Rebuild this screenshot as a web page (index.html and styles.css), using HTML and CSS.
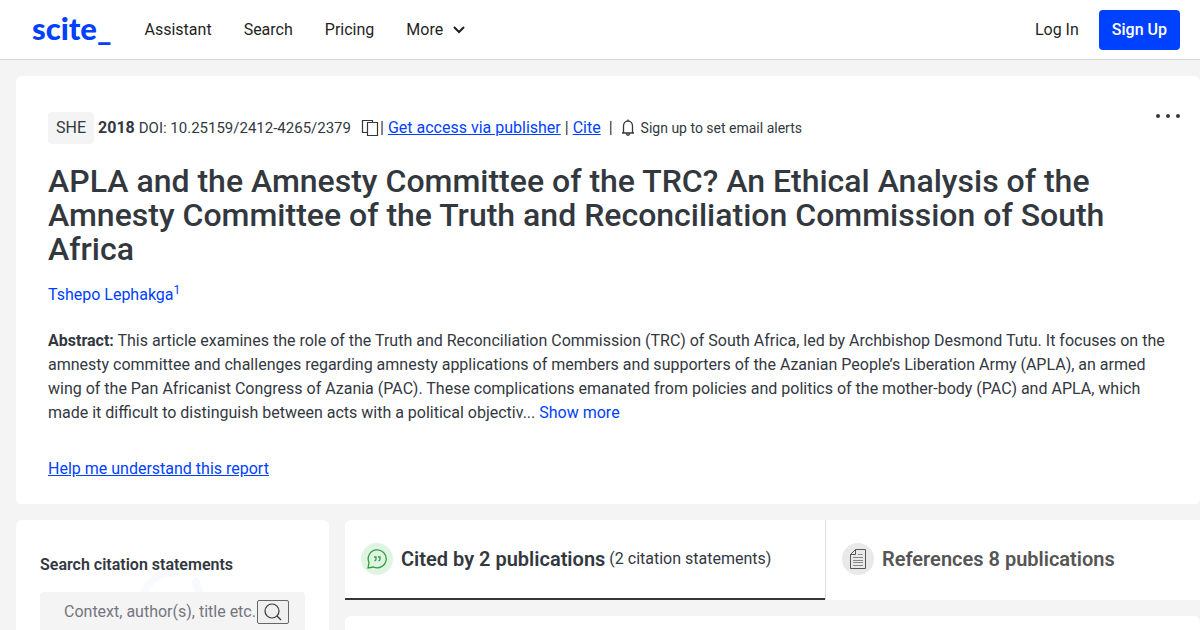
FILE: index.html
```html
<!DOCTYPE html>
<html lang="en">
<head>
    <meta charset="UTF-8">
    <meta name="viewport" content="width=device-width, initial-scale=1.0">
    <title>APLA and the Amnesty Committee of the TRC? - scite</title>
    <link rel="stylesheet" href="styles.css">
</head>
<body>
    <header class="header">
        <a class="logo" href="#">scite_</a>
        <nav class="nav">
            <a href="#">Assistant</a>
            <a href="#">Search</a>
            <a href="#">Pricing</a>
            <button class="more" type="button">More
                <svg width="12" height="8" viewBox="0 0 12 8" fill="none" stroke="currentColor" stroke-width="2"><path d="M1 1l5 5 5-5"/></svg>
            </button>
        </nav>
        <div class="account">
            <a href="#">Log In</a>
            <button class="signup" type="button">Sign Up</button>
        </div>
    </header>
    <main class="page">
        <section class="card paper">
            <div class="meta">
                <span class="journal">SHE</span>
                <b class="year">2018</b>
                <span class="doi">DOI: 10.25159/2412-4265/2379</span>
                <button class="icon-btn copy" type="button" aria-label="Copy DOI">
                    <svg width="18" height="18" viewBox="0 0 18 18" fill="none" stroke="currentColor" stroke-width="1.2"><path d="M6 13.500H1.500v-12h10v2M6.500 3.500h10v13h-10z"/></svg>
                </button>
                <span>|</span>
                <a class="publisher" href="#">Get access via publisher</a>
                <span>|</span>
                <a class="cite" href="#">Cite</a>
                <span>|</span>
                <button class="icon-btn alerts" type="button">
                    <svg width="14" height="18" viewBox="0 0 14 18" fill="none" stroke="currentColor" stroke-width="1.300"><path d="M1 14h12M2.500 14V7a4.500 5 0 0 1 9 0v7M7 2V.5M5.500 14.500a1.500 1.800 0 0 0 3 0"/></svg>
                    Sign up to set email alerts
                </button>
                <button class="icon-btn dots" type="button" aria-label="More actions">
                    <svg width="24" height="4" viewBox="0 0 24 4" fill="currentColor"><circle cx="2" cy="2" r="2"/><circle cx="12" cy="2" r="2"/><circle cx="22" cy="2" r="2"/></svg>
                </button>
            </div>
            <h1>APLA and the Amnesty Committee of the TRC? An Ethical Analysis of the Amnesty Committee of the Truth and Reconciliation Commission of South Africa</h1>
            <p class="author"><a href="#">Tshepo Lephakga<sup>1</sup></a></p>
            <p class="abstract"><b>Abstract:</b> This article examines the role of the Truth and Reconciliation Commission (TRC) of South Africa, led by Archbishop Desmond Tutu. It focuses on the amnesty committee and challenges regarding amnesty applications of members and supporters of the Azanian People’s Liberation Army (APLA), an armed wing of the Pan Africanist Congress of Azania (PAC). These complications emanated from policies and politics of the mother-body (PAC) and APLA, which made it difficult to distinguish between acts with a political objectiv... <a href="#">Show more</a></p>
            <a class="help" href="#">Help me understand this report</a>
        </section>
        <div class="columns">
            <aside class="card sidebar">
                <svg class="ring" width="64" height="64" viewBox="0 0 64 64" fill="none" stroke="#f8faff" stroke-width="8"><path d="M36 60A28 28 0 1 1 38 5M54 11Q60 20 60 32"/></svg>
                <label for="search">Search citation statements</label>
                <form class="search">
                    <input id="search" type="text" placeholder="Context, author(s), title etc.">
                    <button type="button" aria-label="Search">
                        <svg width="18" height="18" viewBox="0 0 18 18" fill="none" stroke="currentColor" stroke-width="1.200"><circle cx="8" cy="8" r="7"/><path d="M13 13l4 4"/></svg>
                    </button>
                </form>
            </aside>
            <div class="content">
                <div class="tabs">
                    <button class="tab active" type="button">
                        <span class="badge green">
                            <svg width="20" height="20" viewBox="0 0 20 20" fill="none" stroke="currentColor" stroke-width="1.300"><path d="M1 19l1-5.500A9 9 0 1 1 6.500 18z"/><path d="M7 8h2v2q0 1.500-1.500 2M11 8h2v2q0 1.500-1.500 2"/></svg>
                        </span>
                        <span class="tab-title">Cited by 2 publications</span>
                        <span class="tab-note">(2 citation statements)</span>
                    </button>
                    <button class="tab" type="button">
                        <span class="badge gray">
                            <svg width="16" height="20" viewBox="0 0 16 20" fill="none" stroke="currentColor"><path d="M5.500.5h10v19H.5v-14zV5.500h-5"/><path stroke="#888" d="M8 5.500h4.500M3 8.500h10M3 11.500h10M3 13.500h10M3 16.500h10"/></svg>
                        </span>
                        <span class="tab-title">References 8 publications</span>
                    </button>
                </div>
                <section class="card results"></section>
            </div>
        </div>
    </main>
</body>
</html>
```

FILE: styles.css
```css
*{
    margin: 0;
    padding: 0;
    box-sizing: border-box;
}
body{
    height: 100vh;
    overflow: hidden;
    background-color: #f4f4f4;
    color: #33383f;
    font-family: Roboto, "Liberation Sans", sans-serif;
    font-size: 16px;
    line-height: 24px;
}
a{
    color: #0041ff;
    text-decoration: none;
}
button{
    border: 0;
    background: none;
    color: inherit;
    font: inherit;
    cursor: pointer;
}
svg{
    display: block;
    flex-shrink: 0;
}
.header{
    display: flex;
    align-items: center;
    height: 60px;
    padding: 0 20px 0 32px;
    background-color: white;
    border-bottom: 1px solid #d8d8d8;
}
.header .logo{
    padding-bottom: 4px;
    color: #0041ff;
    font-family: Lato, sans-serif;
    font-size: 31px;
    font-weight: 900;
    line-height: 40px;
}
.nav{
    display: flex;
    gap: 32px;
    margin-left: 33px;
}
.header a, .more{
    color: #1f1f1f;
}
.more{
    display: flex;
    align-items: center;
    gap: 10px;
}
.account{
    display: flex;
    align-items: center;
    gap: 20px;
    margin-left: auto;
}
.signup{
    height: 40px;
    padding: 0 13px;
    border-radius: 4px;
    background-color: #0041ff;
    color: white;
    font-weight: 500;
}
.header .logo{
    color: #0041ff;
}
.page{
    padding: 16px 0 0 16px;
}
.card{
    background-color: white;
    border-radius: 6px;
}
.paper{
    padding: 36px 32px 23px;
}
.meta{
    display: flex;
    align-items: center;
    gap: 4px;
}
.journal{
    padding: 4px 8px;
    border-radius: 4px;
    background-color: #f4f4f4;
}
.doi{
    font-size: 15px;
}
.icon-btn{
    display: flex;
    align-items: center;
}
.copy{
    margin-left: 6px;
    margin-right: -3px;
}
.publisher, .cite, .help{
    text-decoration: underline;
}
.cite{
    margin-right: 4px;
}
.alerts{
    gap: 6px;
    margin-left: 4px;
    font-size: 14px;
}
.dots{
    align-self: flex-start;
    height: 8px;
    margin-left: auto;
    margin-right: -12px;
}
h1{
    margin-top: 20px;
    font-size: 32px;
    font-weight: 500;
    line-height: 34px;
}
.author{
    margin-top: 17px;
}
sup{
    font-size: 12px;
    line-height: 0;
}
.abstract{
    margin: 22px 0 32px;
}
.columns{
    display: flex;
    gap: 16px;
    margin-top: 16px;
}
.sidebar{
    position: relative;
    flex: 0 0 313px;
    min-width: 0;
    height: 320px;
    padding: 33px 24px;
}
.sidebar label{
    position: relative;
    font-weight: 600;
}
.ring{
    position: absolute;
    top: 48px;
    left: 124px;
}
.search{
    position: relative;
    display: flex;
    align-items: center;
    height: 40px;
    margin-top: 15px;
    padding: 0 16px 0 24px;
    border-radius: 4px;
    background-color: #f4f4f4;
}
.search input{
    flex: 1;
    min-width: 0;
    border: 0;
    background: none;
    font: inherit;
}
.search input::placeholder{
    color: #757580;
}
.search button{
    display: flex;
    align-items: center;
    justify-content: center;
    width: 32px;
    height: 24px;
    border: 1px solid #666;
    border-radius: 2px;
    background-color: #efefef;
}
.content{
    flex: 1;
    min-width: 0;
}
.tabs{
    display: flex;
    background-color: white;
    border-radius: 6px 0 0 0;
}
.tab{
    display: flex;
    align-items: center;
    flex: 1;
    height: 80px;
    padding: 0 16px 2px;
    border-left: 1px solid #ddd;
    color: #555;
    white-space: nowrap;
}
.active{
    flex: 0 0 480px;
    padding-bottom: 0;
    border-left: 0;
    border-bottom: 2px solid #33383f;
    color: #33383f;
}
.badge{
    display: flex;
    align-items: center;
    justify-content: center;
    width: 32px;
    height: 32px;
    margin-right: 8px;
    border-radius: 50%;
}
.green{
    background-color: #dff5e1;
    color: #2f9e44;
}
.gray{
    background-color: #e9e9e9;
}
.tab-title{
    font-size: 20px;
    font-weight: 600;
}
.tab-note{
    margin-left: 4px;
}
.results{
    height: 224px;
    margin-top: 16px;
}
```
